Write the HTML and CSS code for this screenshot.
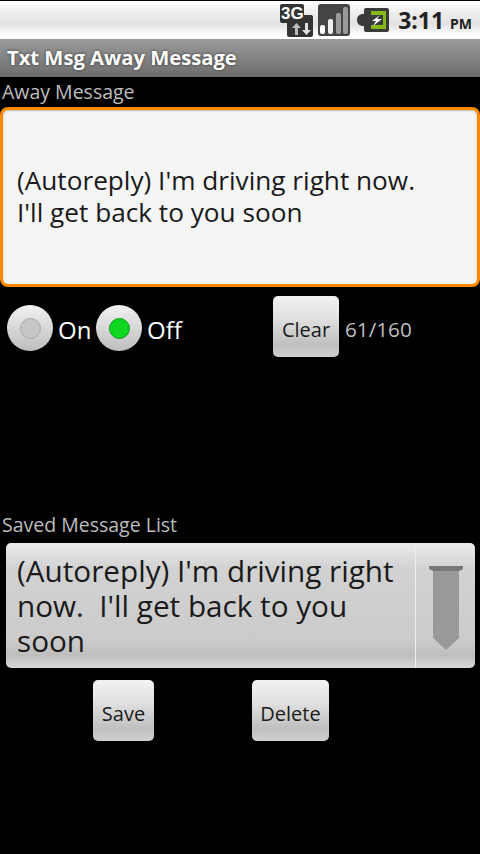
FILE: index.html
```html
<!DOCTYPE html>
<html lang="en">
<head>
    <meta charset="UTF-8" />
    <title>Txt Msg Away Message</title>
    <link rel="stylesheet" href="styles.css">
</head>
<body>
<div class="status-bar">
    <svg class="icon-3g" width="33" height="33" viewBox="0 0 33 33">
        <rect x="0" y="0" width="24" height="19" rx="2" fill="#333"/>
        <rect x="7" y="11" width="26" height="22" rx="2" fill="#333"/>
        <text class="icon-3g-text" x="1" y="15">3G</text>
        <path d="M15 31v-7h-3l4.500-5 4.500 5h-3v7z" fill="#bbb"/>
        <path d="M25 19v7h-3l4.500 5 4.500-5h-3v-7z" fill="#ddd"/>
    </svg>
    <svg class="icon-signal" width="32" height="32" viewBox="0 0 32 32">
        <rect width="32" height="32" rx="3" fill="#444"/>
        <rect x="2" y="21" width="5" height="9" rx="2" fill="#fff"/>
        <rect x="10" y="15" width="5" height="15" rx="2" fill="#eee"/>
        <rect x="18" y="9" width="5" height="21" rx="2" fill="#999"/>
        <rect x="25" y="3" width="5" height="27" rx="2" fill="#999"/>
    </svg>
    <svg class="icon-battery" width="32" height="24" viewBox="0 0 32 24">
        <path d="M5 6h2V2q0-2 2-2h21q2 0 2 2v20q0 2-2 2H9q-2 0-2-2v-4H5q-5-1-5-6t5-6z" fill="#3a3a3a"/>
        <path d="M14 3h15v9H26V7H14z M14 17h12v-5h3v9H14z" fill="#86b817"/>
        <path d="M23 7l-8 6h4l-3 5 9-7h-5z" fill="#fff"/>
    </svg>
    <span class="clock">3:11 <span class="ampm">PM</span></span>
</div>
<div class="title-bar">Txt Msg Away Message</div>

<div class="field-label">Away Message</div>
<div class="message-box">(Autoreply) I'm driving right now. I'll get back to you soon</div>

<div class="controls-row">
    <div class="radio-item">
        <span class="radio"><span class="radio-dot"></span></span>
        <span class="radio-text">On</span>
    </div>
    <div class="radio-item">
        <span class="radio"><span class="radio-dot checked"></span></span>
        <span class="radio-text">Off</span>
    </div>
    <button class="btn btn-clear" type="button">Clear</button>
    <span class="counter">61/160</span>
</div>

<div class="field-label saved-label">Saved Message List</div>
<div class="spinner">
    <div class="spinner-text">(Autoreply) I'm driving right now.&nbsp; I'll get back to you soon</div>
    <div class="spinner-arrow">
        <svg width="34" height="84" viewBox="0 0 34 84">
            <path d="M4 4h26v68L17 84 4 72z" fill="#999"/>
            <path d="M0 0h34v3l-4 2H4L0 3z" fill="#777"/>
        </svg>
    </div>
</div>
<div class="actions-row">
    <button class="btn btn-save" type="button">Save</button>
    <button class="btn btn-delete" type="button">Delete</button>
</div>
</body>
</html>
```
FILE: styles.css
```css
* {
    box-sizing: border-box;
    margin: 0;
    padding: 0;
}

html, body {
    height: 854px;
    overflow: hidden;
}

body {
    width: 480px;
    background: #000;
    color: #fff;
    font-family: "Open Sans", "Noto Sans", sans-serif;
}

/* Status bar */
.status-bar {
    height: 39px;
    border-top: 1px solid #000;
    background: linear-gradient(#fff, #f0f0f0 25%, #e2e2e2 60%, #fff 92%);
    display: flex;
    align-items: center;
    justify-content: flex-end;
    padding-right: 8px;
    color: #222;
}

.icon-3g {
    margin-right: 5px;
}

.icon-3g-text {
    fill: #fff;
    font-family: "Liberation Sans", sans-serif;
    font-size: 17px;
    font-weight: 700;
}

.icon-signal {
    margin-right: 7px;
}

.icon-battery {
    margin-right: 9px;
}

.clock {
    font-family: "Noto Sans", sans-serif;
    font-size: 23px;
    font-weight: 700;
    white-space: pre;
}

.ampm {
    font-size: 14px;
}

/* Title bar */
.title-bar {
    height: 38px;
    background: linear-gradient(#9b9b9b, #6c6c6c);
    padding-left: 7px;
    font-size: 20.2px;
    font-weight: 700;
    line-height: 37px;
    text-shadow: 0 0 3px #333;
}

.field-label {
    height: 30px;
    padding-left: 2px;
    color: #bdbdbd;
    font-size: 19.5px;
    line-height: 30px;
}

/* Edit box */
.message-box {
    height: 180px;
    border: 3px solid #ff8a00;
    border-radius: 8px;
    background: #f5f5f5;
    box-shadow: inset 0 1px 2px #bbb;
    padding: 54px 40px 0 14px;
    color: #1a1a1a;
    font-size: 26.2px;
    line-height: 32px;
}

/* Radio + clear row */
.controls-row {
    display: flex;
    align-items: center;
    height: 61px;
    margin-top: 9px;
    padding-left: 7px;
}

.radio-item {
    display: flex;
    align-items: center;
    width: 89px;
    margin-top: 3px;
}

.radio {
    width: 46px;
    height: 46px;
    border-radius: 50%;
    background: linear-gradient(#f2f2f2, #bdbdbd);
    display: flex;
    align-items: center;
    justify-content: center;
    flex-shrink: 0;
}

.radio-dot {
    width: 21px;
    height: 21px;
    border-radius: 50%;
    background: #c6c6c6;
    border: 1px solid #a8a8a8;
}

.radio-dot.checked {
    background: #10d820;
    border-color: #0d9c18;
}

.radio-text {
    margin-left: 5px;
    padding-top: 3px;
    font-size: 24px;
}

.btn {
    height: 61px;
    padding-top: 5px;
    border: none;
    border-radius: 5px;
    background: linear-gradient(#f2f2f2, #e2e2e2 35%, #bfbfbf 80%, #d0d0d0);
    color: #1a1a1a;
    font-family: "Open Sans", "Noto Sans", sans-serif;
    font-size: 20px;
}

.btn-clear {
    width: 66px;
    margin-left: 88px;
}

.counter {
    margin-left: 6px;
    padding-top: 4px;
    color: #bdbdbd;
    font-size: 20.7px;
}

.saved-label {
    margin-top: 153px;
    height: 33px;
}

/* Spinner */
.spinner {
    display: flex;
    width: 469px;
    height: 125px;
    margin-left: 6px;
    border-radius: 5px;
    background: linear-gradient(#ececec, #d2d2d2 20%, #cbcbcb 78%, #bebebe 90%, #d8d8d8);
}

.spinner-text {
    width: 409px;
    padding: 10px 0 0 11px;
    color: #1a1a1a;
    font-size: 29.7px;
    line-height: 35px;
}

.spinner-arrow {
    flex: 1;
    border-left: 1px solid #eee;
    padding: 23px 0 0 13px;
}

.actions-row {
    display: flex;
    margin-top: 12px;
    padding-left: 93px;
}

.btn-save {
    width: 61px;
}

.btn-delete {
    width: 77px;
    margin-left: 98px;
}
```
